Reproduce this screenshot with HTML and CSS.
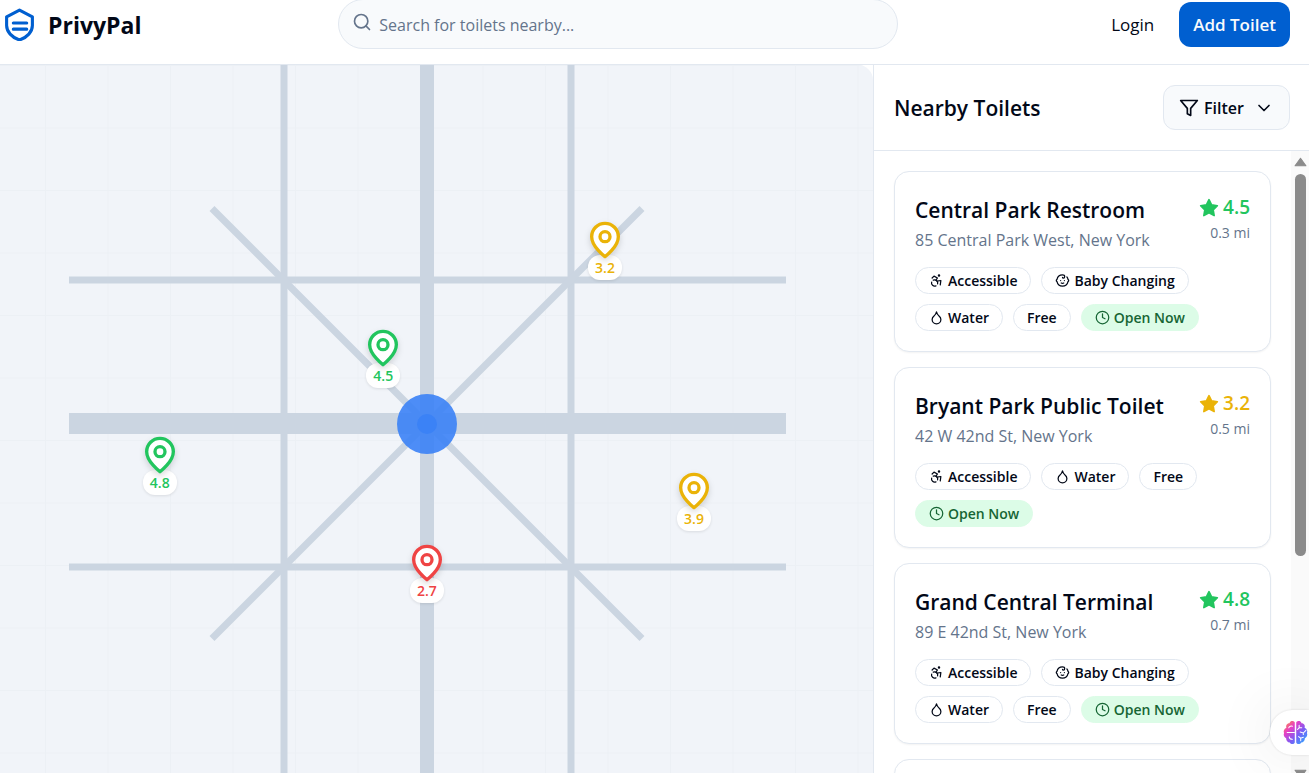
FILE: index.html
```html
<!DOCTYPE html>
<html lang="en">
<head>
    <meta charset="UTF-8">
    <meta name="viewport" content="width=device-width, initial-scale=1.0">
    <title>PrivyPal</title>
    <link rel="stylesheet" href="styles.css">
</head>
<body>
    <!-- Shared icons -->
    <svg class="sprite" aria-hidden="true">
        <symbol id="pin" viewBox="0 0 24 24">
            <path d="M20 10c0 6-8 12-8 12s-8-6-8-12a8 8 0 0 1 16 0Z" fill="#fff"/>
            <circle cx="12" cy="10" r="3" fill="#fff"/>
        </symbol>
        <symbol id="star" viewBox="0 0 24 24">
            <path d="M12 2l3.09 6.26L22 9.27l-5 4.87 1.18 6.88L12 17.77l-6.18 3.25L7 14.14 2 9.27l6.91-1.01L12 2z" fill="currentColor"/>
        </symbol>
        <symbol id="accessible" viewBox="0 0 24 24">
            <circle cx="16" cy="4" r="1"/>
            <path d="m18 19 1-7-6 1"/>
            <path d="m5 8 3-3 5.5 3-2.36 3.5"/>
            <path d="M4.24 14.5a5 5 0 0 0 6.88 6"/>
            <path d="M13.76 17.5a5 5 0 0 0-6.88-6"/>
        </symbol>
        <symbol id="baby" viewBox="0 0 24 24">
            <path d="M9 12h.01M15 12h.01M10 16c.5.3 1.2.5 2 .5s1.5-.2 2-.5"/>
            <path d="M19 6.3a9 9 0 0 1 1.8 3.9 2 2 0 0 1 0 3.6 9 9 0 0 1-17.6 0 2 2 0 0 1 0-3.6A9 9 0 0 1 12 3c2 0 3.5 1.1 3.5 2.5s-.9 2.5-2 2.5c-.8 0-1.5-.4-1.5-1"/>
        </symbol>
        <symbol id="water" viewBox="0 0 24 24">
            <path d="M12 22a7 7 0 0 0 7-7c0-2-1-3.9-3-5.5s-3.5-4-4-6.5c-.5 2.5-2 4.9-4 6.5S5 13 5 15a7 7 0 0 0 7 7z"/>
        </symbol>
        <symbol id="clock" viewBox="0 0 24 24">
            <circle cx="12" cy="12" r="10"/>
            <path d="M12 6v6l4 2"/>
        </symbol>
    </svg>

    <header class="topbar">
        <a class="logo" href="#">
            <svg class="logo-icon" viewBox="0 0 28 32">
                <path d="M14 2 26.5 8.5V17c0 6-5 11.5-12.5 14C6.5 28.5 1.5 23 1.5 17V8.5z"/>
                <path d="M8 14.5h13M8 20.5h13"/>
            </svg>
            PrivyPal
        </a>
        <label class="search">
            <svg class="icon search-icon" viewBox="0 0 24 24"><circle cx="11" cy="11" r="8"/><path d="m21 21-4.3-4.3"/></svg>
            <input type="text" placeholder="Search for toilets nearby..." aria-label="Search for toilets nearby">
        </label>
        <nav class="actions">
            <a class="login" href="#">Login</a>
            <button class="add" type="button">Add Toilet</button>
        </nav>
    </header>

    <main class="content">
        <section class="map">
            <svg class="roads" viewBox="0 0 873 708" preserveAspectRatio="xMidYMin slice" aria-hidden="true">
                <defs>
                    <pattern id="grid" x="45" y="0" width="62.5" height="62.5" patternUnits="userSpaceOnUse">
                        <path d="M62.5 0H0V62.5" fill="none" stroke="#ecf0f5" stroke-width="2"/>
                    </pattern>
                </defs>
                <rect width="873" height="720" fill="url(#grid)"/>
                <g stroke="#cbd5e1" stroke-width="7">
                    <path d="M69 215H786M69 502H786"/>
                    <path d="M284 0V717M571 0V717"/>
                    <path d="M212 143.5 642 573.5M642 143.5 212 573.5"/>
                    <path d="M427 0V717" stroke-width="14"/>
                    <path d="M69 358.5H786" stroke-width="21"/>
                </g>
                <circle cx="427" cy="359" r="30" fill="#3b82f6" opacity="0.9"/>
                <circle cx="427" cy="359" r="10" fill="#3b82f6"/>
            </svg>
            <button class="pin pin-central good" type="button"><svg><use href="#pin"/></svg><span>4.5</span></button>
            <button class="pin pin-bryant fair" type="button"><svg><use href="#pin"/></svg><span>3.2</span></button>
            <button class="pin pin-grand good" type="button"><svg><use href="#pin"/></svg><span>4.8</span></button>
            <button class="pin pin-south poor" type="button"><svg><use href="#pin"/></svg><span>2.7</span></button>
            <button class="pin pin-east fair" type="button"><svg><use href="#pin"/></svg><span>3.9</span></button>
        </section>

        <aside class="sidebar">
            <div class="sidebar-head">
                <h2>Nearby Toilets</h2>
                <button class="filter" type="button">
                    <svg class="icon filter-icon" viewBox="0 0 24 24"><path d="M22 3H2l8 9.46V19l4 2v-8.54z"/></svg>
                    Filter
                    <svg class="icon chevron" viewBox="0 0 24 24"><path d="m6 9 6 6 6-6"/></svg>
                </button>
            </div>
            <div class="scroller">
                <div class="list">
                    <article class="card">
                        <div class="card-top">
                            <div>
                                <h3>Central Park Restroom</h3>
                                <p class="address">85 Central Park West, New York</p>
                            </div>
                            <div class="score">
                                <p class="rating good"><svg><use href="#star"/></svg>4.5</p>
                                <p class="distance">0.3 mi</p>
                            </div>
                        </div>
                        <ul class="tags">
                            <li><svg class="icon"><use href="#accessible"/></svg>Accessible</li>
                            <li><svg class="icon"><use href="#baby"/></svg>Baby Changing</li>
                            <li><svg class="icon"><use href="#water"/></svg>Water</li>
                            <li>Free</li>
                            <li class="open"><svg class="icon"><use href="#clock"/></svg>Open Now</li>
                        </ul>
                    </article>
                    <article class="card">
                        <div class="card-top">
                            <div>
                                <h3>Bryant Park Public Toilet</h3>
                                <p class="address">42 W 42nd St, New York</p>
                            </div>
                            <div class="score">
                                <p class="rating fair"><svg><use href="#star"/></svg>3.2</p>
                                <p class="distance">0.5 mi</p>
                            </div>
                        </div>
                        <ul class="tags">
                            <li><svg class="icon"><use href="#accessible"/></svg>Accessible</li>
                            <li><svg class="icon"><use href="#water"/></svg>Water</li>
                            <li>Free</li>
                            <li class="open"><svg class="icon"><use href="#clock"/></svg>Open Now</li>
                        </ul>
                    </article>
                    <article class="card">
                        <div class="card-top">
                            <div>
                                <h3>Grand Central Terminal</h3>
                                <p class="address">89 E 42nd St, New York</p>
                            </div>
                            <div class="score">
                                <p class="rating good"><svg><use href="#star"/></svg>4.8</p>
                                <p class="distance">0.7 mi</p>
                            </div>
                        </div>
                        <ul class="tags">
                            <li><svg class="icon"><use href="#accessible"/></svg>Accessible</li>
                            <li><svg class="icon"><use href="#baby"/></svg>Baby Changing</li>
                            <li><svg class="icon"><use href="#water"/></svg>Water</li>
                            <li>Free</li>
                            <li class="open"><svg class="icon"><use href="#clock"/></svg>Open Now</li>
                        </ul>
                    </article>
                    <article class="card card-next"></article>
                </div>
                <div class="scrollbar" aria-hidden="true">
                    <svg class="arrow" viewBox="0 0 12 9"><path d="M6 1 11 8H1z"/></svg>
                    <div class="thumb"></div>
                    <svg class="arrow arrow-down" viewBox="0 0 12 9"><path d="M6 8 1 1h10z"/></svg>
                </div>
            </div>
        </aside>
    </main>

    <button class="assistant" type="button" aria-label="Assistant">
        <svg viewBox="0 0 24 24">
            <defs>
                <linearGradient id="brain" x1="0" y1="0" x2="1" y2="1">
                    <stop offset="0" stop-color="#ff9a2e"/>
                    <stop offset="0.3" stop-color="#e83fc4"/>
                    <stop offset="0.6" stop-color="#7c5cf5"/>
                    <stop offset="1" stop-color="#22b4ff"/>
                </linearGradient>
            </defs>
            <path fill="url(#brain)" d="M11.3 2.5C10.500.5 7 .5 6.2 3 3.5 3 2.5 5.5 3.3 7.5.8 8.500.2 11 1 12.5c-.8 2 0 4 2 5 0 2.5 1.5 4 3.5 4 1 2 4 2 4.8 0zM12.7 2.5C13.500.5 17 .5 17.8 3c2.7 0 3.7 2.5 2.9 4.5 2.5 1 3.1 3.5 2.3 5 .8 2 0 4-2 5 0 2.5-1.5 4-3.5 4-1 2-4 2-4.8 0z"/>
            <path fill="none" stroke="#fff" stroke-width="1" stroke-linecap="round" d="M4 12h7M5.5 7.5C6 6 8 5.5 9 6M6 16c0 2 1.5 2.5 3 2.5M15.5 5v2.5h2.5M15.5 7.5 14 9M22 10l-2.5 2.5-3-1M19.5 12.5v1.5M15 16l2 1.5 2.5-1M17 17.5V20"/>
        </svg>
    </button>
</body>
</html>
```
FILE: styles.css
```css
* {
    box-sizing: border-box;
    margin: 0;
    padding: 0;
}
body {
    display: flex;
    flex-direction: column;
    height: 100vh;
    overflow: hidden;
    background-color: #ffffff;
    color: #020817;
    font-family: "Open Sans", "Noto Sans", sans-serif;
    font-size: 16px;
}
button,
input {
    font: inherit;
    color: inherit;
}
button {
    cursor: pointer;
}
a {
    color: inherit;
    text-decoration: none;
}
.sprite {
    position: absolute;
    width: 0;
    height: 0;
}
.icon {
    flex: none;
    fill: none;
    stroke: currentColor;
    stroke-width: 2;
    stroke-linecap: round;
    stroke-linejoin: round;
}

/* Header */
.topbar {
    display: flex;
    align-items: center;
    justify-content: space-between;
    flex: none;
    height: 65px;
    padding: 0 19px 15px 5px;
    border-bottom: 1px solid #e2e8f0;
}
.logo {
    display: flex;
    align-items: center;
    gap: 14px;
    font-size: 23px;
    font-weight: 700;
}
.logo-icon {
    width: 29px;
    height: 33px;
    fill: none;
    stroke: #005fd0;
    stroke-width: 3;
    stroke-linecap: round;
    stroke-linejoin: round;
}
.search {
    display: flex;
    align-items: flex-start;
    gap: 7px;
    width: 560px;
    height: 50px;
    margin-top: -2px;
    padding: 0 13px;
    background-color: #f8fafc;
    border: 1px solid #e2e8f0;
    border-radius: 25px;
}
.search-icon {
    width: 20px;
    height: 20px;
    margin-top: 12px;
    color: #64748b;
}
.search input {
    flex: 1;
    height: 50px;
    border: none;
    outline: none;
    background: transparent;
}
.search input::placeholder {
    color: #64748b;
}
.actions {
    display: flex;
    align-items: center;
    gap: 9px;
    font-size: 17px;
    font-weight: 500;
}
.login {
    padding: 0 16px;
}
.add {
    height: 45px;
    padding: 0 14px;
    border: none;
    border-radius: 12px;
    background-color: #005fd0;
    color: #f8fafc;
    font-weight: 600;
}

/* Map */
.content {
    display: flex;
    flex: 1;
    min-height: 0;
}
.map {
    position: relative;
    flex: 1;
    overflow: hidden;
    background-color: #f1f4f9;
    border-top-right-radius: 15px;
}
.roads {
    display: block;
    width: 100%;
    height: 100%;
}
.pin {
    position: absolute;
    display: flex;
    flex-direction: column;
    align-items: center;
    transform: translateX(-50%);
    border: none;
    background: none;
}
.pin svg {
    position: relative;
    z-index: 1;
    width: 40px;
    height: 40px;
    fill: none;
    stroke: currentColor;
    stroke-width: 2;
    stroke-linejoin: round;
    filter: drop-shadow(0 3px 3px rgba(0, 0, 0, 0.15));
}
.pin span {
    margin-top: -5px;
    padding: 0 7px;
    border-radius: 12px;
    background-color: #ffffff;
    box-shadow: 0 1px 3px rgba(0, 0, 0, 0.1);
    font-size: 14px;
    font-weight: 600;
    line-height: 25px;
}
.pin-central {
    left: 43.9%;
    top: 37.1%;
}
.pin-bryant {
    left: 69.3%;
    top: 21.9%;
}
.pin-grand {
    left: 18.3%;
    top: 52.3%;
}
.pin-south {
    left: 48.9%;
    top: 67.5%;
}
.pin-east {
    left: 79.5%;
    top: 57.3%;
}
.good {
    color: #22c55e;
}
.fair {
    color: #eab308;
}
.poor {
    color: #ef4444;
}

/* Sidebar */
.sidebar {
    display: flex;
    flex-direction: column;
    width: 436px;
    border-left: 1px solid #e2e8f0;
}
.sidebar-head {
    display: flex;
    align-items: center;
    justify-content: space-between;
    padding: 20px 19px 20px 20px;
    border-bottom: 1px solid #e2e8f0;
}
h2,
h3 {
    font-size: 21px;
    font-weight: 600;
}
.filter {
    display: flex;
    align-items: center;
    height: 45px;
    padding: 0 15px;
    background-color: #f8fafc;
    border: 1px solid #e2e8f0;
    border-radius: 12px;
    font-weight: 600;
}
.filter-icon {
    width: 20px;
    height: 20px;
    margin-right: 5px;
}
.chevron {
    width: 20px;
    height: 20px;
    margin-left: 10px;
}
.scroller {
    display: flex;
    flex: 1;
    min-height: 0;
}
.list {
    display: flex;
    flex-direction: column;
    flex: 1;
    gap: 15px;
    padding: 20px;
    overflow: hidden;
}
.card {
    flex: none;
    padding: 20px;
    background-color: #ffffff;
    border: 1px solid #e2e8f0;
    border-radius: 15px;
    box-shadow: 0 1px 2px rgba(0, 0, 0, 0.05);
}
.card-next {
    height: 181px;
}
.card-top {
    display: flex;
    justify-content: space-between;
    margin-bottom: 14px;
}
.card h3 {
    line-height: 36px;
}
.address {
    color: #64748b;
    line-height: 25px;
}
.score {
    display: flex;
    flex-direction: column;
    align-items: flex-end;
}
.rating {
    display: flex;
    align-items: center;
    gap: 4px;
    font-size: 19px;
    font-weight: 600;
    line-height: 31px;
}
.rating svg {
    width: 20px;
    height: 20px;
    stroke: currentColor;
    stroke-width: 2;
    stroke-linejoin: round;
}
.distance {
    color: #64748b;
    font-size: 14px;
    line-height: 20px;
}
.tags {
    display: flex;
    flex-wrap: wrap;
    gap: 10px;
    list-style: none;
}
.tags li {
    display: flex;
    align-items: center;
    gap: 4px;
    padding: 3px 13px;
    border: 1px solid #e2e8f0;
    border-radius: 14px;
    font-size: 14px;
    font-weight: 600;
    line-height: 19px;
}
.tags .icon {
    width: 15px;
    height: 15px;
}
.tags .open {
    background-color: #dcfce7;
    border-color: #dcfce7;
    color: #166534;
}
.scrollbar {
    display: flex;
    flex-direction: column;
    align-items: center;
    width: 18px;
    padding-top: 6px;
    background-color: #fafafa;
}
.arrow {
    flex: none;
    width: 13px;
    height: 10px;
    fill: #8b8b8b;
    stroke: #8b8b8b;
    stroke-width: 1;
    stroke-linejoin: round;
}
.arrow-down {
    margin-top: auto;
    margin-bottom: -6px;
}
.thumb {
    width: 11px;
    height: 62%;
    margin-top: 7px;
    border-radius: 6px;
    background-color: #8b8b8b;
}

/* Floating assistant button */
.assistant {
    position: fixed;
    right: 0;
    bottom: 18px;
    display: flex;
    align-items: center;
    width: 39px;
    height: 45px;
    padding-left: 13px;
    border: none;
    border-radius: 23px 0 0 23px;
    background-color: #ffffff;
    box-shadow: 0 0 60px rgba(0, 0, 0, 0.12), 0 0 3px rgba(0, 0, 0, 0.12);
}
.assistant svg {
    flex: none;
    width: 25px;
    height: 25px;
}
```
